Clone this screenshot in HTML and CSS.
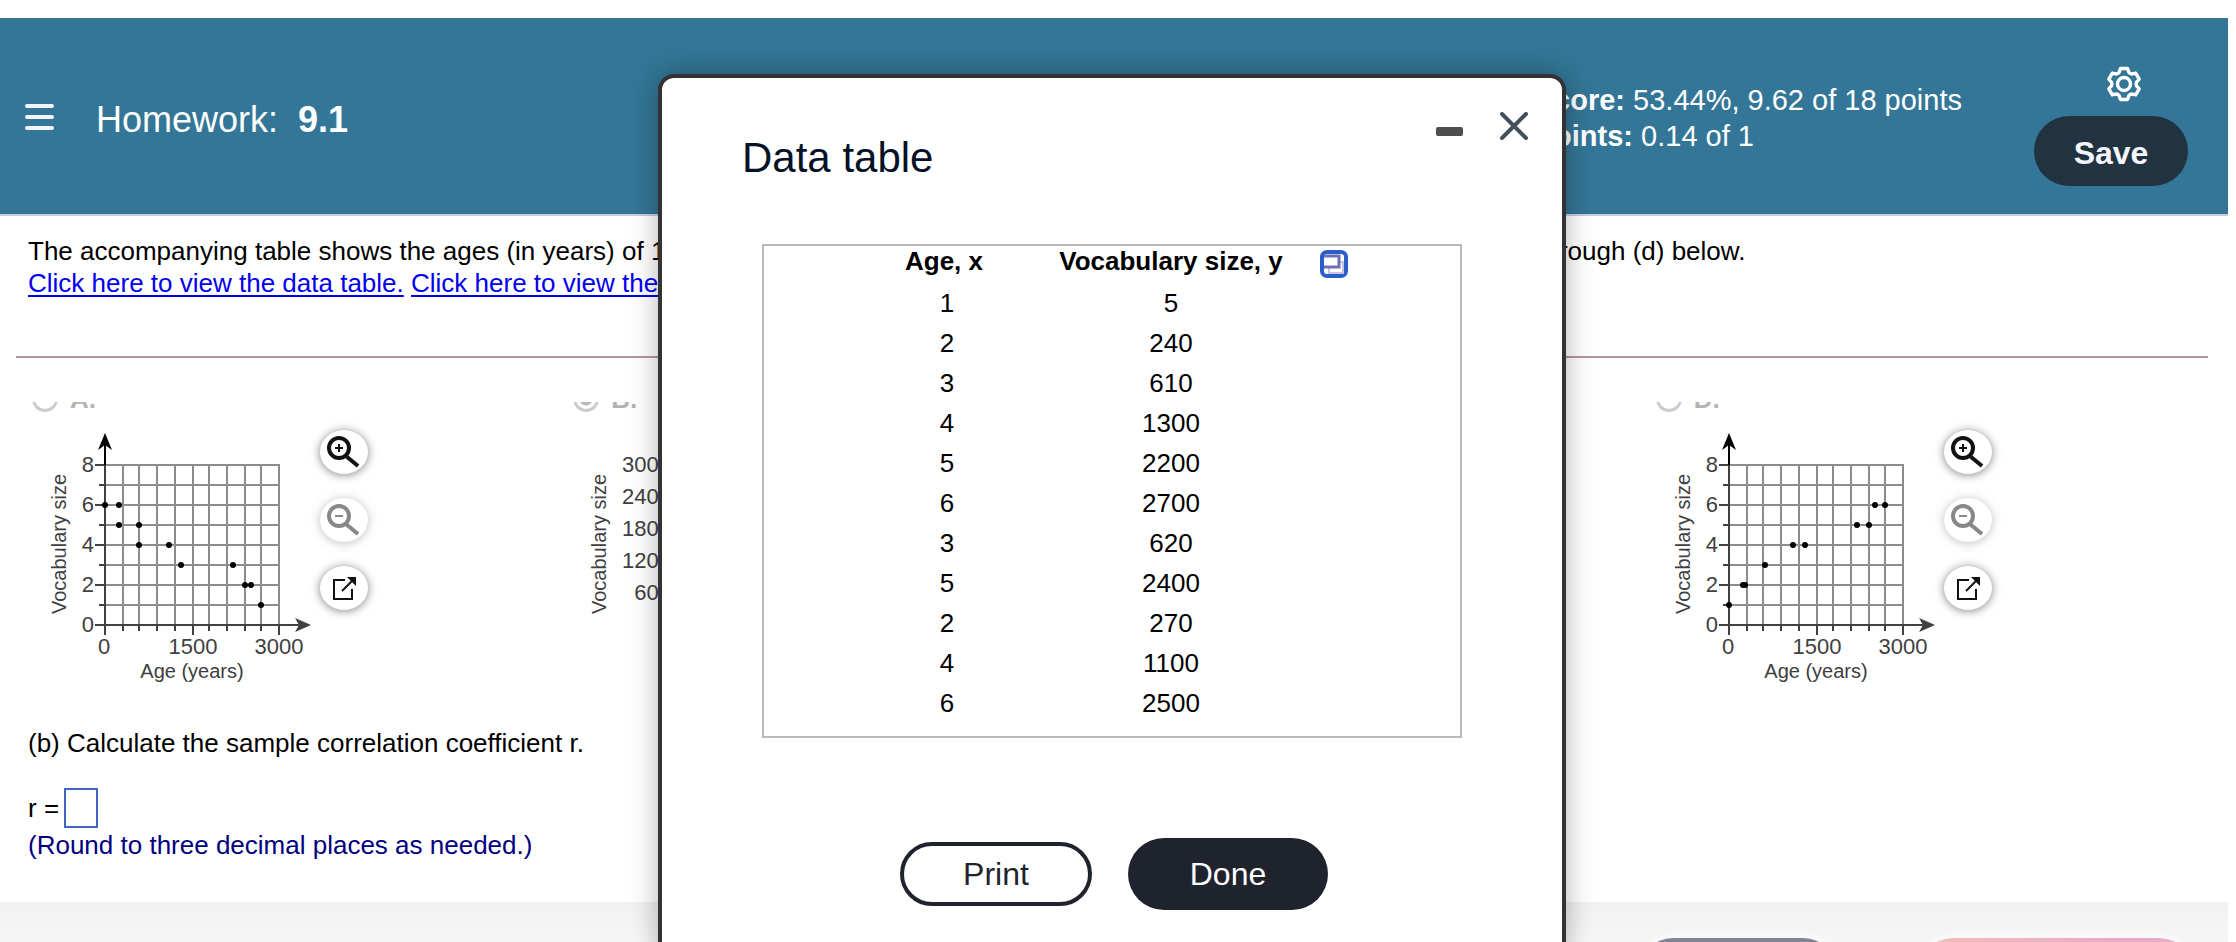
FILE: index.html
```html
<!DOCTYPE html>
<html lang="en">
<head>
<meta charset="utf-8">
<title>Homework: 9.1</title>
<link rel="stylesheet" href="styles.css">
</head>
<body>
<svg class="defs" aria-hidden="true">
  <symbol id="plus-lens" viewBox="0 0 34 34" overflow="visible">
    <circle cx="12" cy="13" r="10" fill="none" stroke="currentColor" stroke-width="4"/>
    <path d="M12 9v8M8 13h8" stroke="currentColor" stroke-width="2"/>
    <path d="M19.500 21.500L31 31" stroke="currentColor" stroke-width="4"/>
  </symbol>
  <symbol id="minus-lens" viewBox="0 0 34 34" overflow="visible">
    <circle cx="12" cy="13" r="10" fill="none" stroke="currentColor" stroke-width="4"/>
    <path d="M8 13h8" stroke="currentColor" stroke-width="2"/>
    <path d="M19.500 21.500L31 31" stroke="currentColor" stroke-width="4"/>
  </symbol>
  <symbol id="popout" viewBox="0 0 34 34">
    <path d="M18 9H7v19h18V18" fill="none" stroke="currentColor" stroke-width="2"/>
    <path d="M15 20L26 9" stroke="currentColor" stroke-width="2"/>
    <path d="M20 6h9v9z" fill="currentColor"/>
  </symbol>
  <symbol id="plot" viewBox="28 416 288 280">
    <path class="grid" d="M123 465V625M139 465V625M157 465V625M175 465V625M193 465V625M209 465V625M227 465V625M245 465V625M261 465V625M279 465V625M105 465H280M105 485H279M105 505H279M105 525H279M105 545H279M105 565H279M105 585H279M105 605H279"/>
    <path class="axis" d="M105 465V635M95 625H299M193 625V635M279 625V635M123 625V631M139 625V631M157 625V631M175 625V631M209 625V631M227 625V631M245 625V631M261 625V631M95 465H105M95 505H105M95 545H105M95 585H105M99 485H105M99 525H105M99 565H105M99 605H105"/>
    <path d="M311 625L295 618L299 625L295 632Z" fill="#404040"/>
    <path d="M105 465V445" stroke="#000" stroke-width="2"/>
    <path d="M105 433L98 450L105 445L112 450Z"/>
    <g class="tick-end"><text x="94" y="472">8</text><text x="94" y="512">6</text><text x="94" y="552">4</text><text x="94" y="592">2</text><text x="94" y="632">0</text></g>
    <g class="tick-mid"><text x="104" y="654">0</text><text x="193" y="654">1500</text><text x="279" y="654">3000</text></g>
    <text class="axis-name" x="192" y="678">Age (years)</text>
    <text class="axis-name" transform="translate(66 544) rotate(-90)">Vocabulary size</text>
  </symbol>
</svg>

<header class="topbar">
  <button class="menu" aria-label="Menu"><svg viewBox="0 0 30 28"><path d="M3 3H28M3 14H28M3 25H28" stroke="#f5f5fd" stroke-width="4" stroke-linecap="round"/></svg></button>
  <h1 class="title">Homework:&nbsp; <b>9.1</b></h1>
  <div class="score">
    <div><b>Score:</b> 53.44%, 9.62 of 18 points</div>
    <div><b>Points:</b> 0.14 of 1</div>
  </div>
  <div class="actions">
    <button class="gear" aria-label="Settings"><svg viewBox="0 0 36 36" fill="none" stroke="#fff" stroke-width="3.400" stroke-linejoin="round"><path d="M14.500 2.500H21.500L23 6.600Q24 8 26 8L29.700 7.200L33.200 13.200L30.500 16.200Q29.700 18 30.500 19.800L33.200 22.800L29.700 28.800L26 28Q24 28 23 29.400L21.500 33.500H14.500L13 29.400Q12 28 10 28L6.300 28.800L2.800 22.800L5.500 19.800Q6.300 18 5.500 16.200L2.800 13.200L6.300 7.200L10 8Q12 8 13 6.600Z"/><circle cx="18" cy="18" r="6.500"/></svg></button>
    <button class="save">Save</button>
  </div>
</header>

<main class="question">
  <p>The accompanying table shows the ages (in years) of 11 children and the numbers of words in their vocabulary. Complete parts (a) through (d) below.</p>
  <p><a href="#table">Click here to view the data table.</a> <a href="#critical">Click here to view the table of critical values for the correlation coefficient.</a></p>
  <hr class="rule">
  <section class="options">
    <div class="option">
      <label class="choice"><input type="radio" name="plot" disabled>A.</label>
      <div class="figure">
        <svg class="chart" viewBox="28 416 288 280">
          <use href="#plot" x="28" y="416" width="288" height="280"/>
          <g><circle cx="105" cy="505" r="3"/><circle cx="119" cy="505" r="3"/><circle cx="119" cy="525" r="3"/><circle cx="139" cy="525" r="3"/><circle cx="139" cy="545" r="3"/><circle cx="169" cy="545" r="3"/><circle cx="181" cy="565" r="3"/><circle cx="233" cy="565" r="3"/><circle cx="245" cy="585" r="3"/><circle cx="251" cy="585" r="3"/><circle cx="261" cy="605" r="3"/></g>
        </svg>
        <div class="tools">
          <button class="tool" aria-label="Zoom in"><svg><use href="#plus-lens"/></svg></button>
          <button class="tool dim" aria-label="Zoom out" disabled><svg><use href="#minus-lens"/></svg></button>
          <button class="tool" aria-label="Open in window"><svg><use href="#popout"/></svg></button>
        </div>
      </div>
    </div>
    <div class="option">
      <label class="choice"><input type="radio" name="plot" checked disabled>B.</label>
      <div class="figure">
        <svg class="chart" viewBox="28 416 288 280">
          <g class="tick-end"><text x="130" y="472">3000</text><text x="130" y="504">2400</text><text x="130" y="536">1800</text><text x="130" y="568">1200</text><text x="130" y="600">600</text><text x="130" y="632">0</text></g>
          <text class="axis-name" transform="translate(65 544) rotate(-90)">Vocabulary size</text>
        </svg>
      </div>
    </div>
    <div class="option"></div>
    <div class="option">
      <label class="choice"><input type="radio" name="plot" disabled>D.</label>
      <div class="figure">
        <svg class="chart" viewBox="28 416 288 280">
          <use href="#plot" x="28" y="416" width="288" height="280"/>
          <g><circle cx="105" cy="605" r="3"/><circle cx="119" cy="585" r="3"/><circle cx="121" cy="585" r="3"/><circle cx="141" cy="565" r="3"/><circle cx="169" cy="545" r="3"/><circle cx="181" cy="545" r="3"/><circle cx="233" cy="525" r="3"/><circle cx="245" cy="525" r="3"/><circle cx="251" cy="505" r="3"/><circle cx="261" cy="505" r="3"/></g>
        </svg>
        <div class="tools">
          <button class="tool" aria-label="Zoom in"><svg><use href="#plus-lens"/></svg></button>
          <button class="tool dim" aria-label="Zoom out" disabled><svg><use href="#minus-lens"/></svg></button>
          <button class="tool" aria-label="Open in window"><svg><use href="#popout"/></svg></button>
        </div>
      </div>
    </div>
  </section>
  <p>(b) Calculate the sample correlation coefficient r.</p>
  <div class="answer"><label for="r">r =</label><input id="r" type="text"></div>
  <p class="hint">(Round to three decimal places as needed.)</p>
</main>

<footer class="bottombar">
  <button class="clear" aria-label="Clear all"></button>
  <button class="check" aria-label="Check answer"></button>
</footer>

<div class="modal" role="dialog" aria-labelledby="modal-title">
  <div class="modal-head">
    <h2 id="modal-title">Data table</h2>
    <button class="minimize" aria-label="Minimize"></button>
    <button class="close" aria-label="Close"><svg viewBox="0 0 28 28"><path d="M2 2L26 26M26 2L2 26" stroke="#434f5c" stroke-width="4" stroke-linecap="round"/></svg></button>
  </div>
  <div class="frame">
    <table class="data" id="table">
      <thead><tr><th class="age">Age, x</th><th class="size">Vocabulary size, y</th><td><button class="copy" aria-label="Copy table"><svg viewBox="0 0 28 28"><rect x="2" y="2" width="24" height="24" rx="5" fill="#fff" stroke="#2a5fc9" stroke-width="4"/><path d="M9 18v5h14V12h-3" fill="none" stroke="#c3c3e2" stroke-width="2"/><path d="M4 17h15V6H4" fill="none" stroke="#6f6fb5" stroke-width="3"/></svg></button></td></tr></thead>
      <tbody>
        <tr><td>1</td><td>5</td></tr>
        <tr><td>2</td><td>240</td></tr>
        <tr><td>3</td><td>610</td></tr>
        <tr><td>4</td><td>1300</td></tr>
        <tr><td>5</td><td>2200</td></tr>
        <tr><td>6</td><td>2700</td></tr>
        <tr><td>3</td><td>620</td></tr>
        <tr><td>5</td><td>2400</td></tr>
        <tr><td>2</td><td>270</td></tr>
        <tr><td>4</td><td>1100</td></tr>
        <tr><td>6</td><td>2500</td></tr>
      </tbody>
    </table>
  </div>
  <div class="modal-actions">
    <button class="print">Print</button>
    <button class="done">Done</button>
  </div>
</div>
</body>
</html>
```
FILE: styles.css
```css
* { box-sizing: border-box; }
html, body { height: 100%; }
body {
  display: flex;
  flex-direction: column;
  margin: 0;
  padding: 18px 8px 0 0;
  overflow: hidden;
  position: relative;
  background: #fff;
  color: #000;
  font: 26px/32px "Liberation Sans", Arial, sans-serif;
}
button { border: 0; padding: 0; background: none; font: inherit; cursor: pointer; }
svg { display: block; }
p, h1, h2 { margin: 0; font-weight: normal; }
.defs { width: 0; height: 0; position: absolute; }

.topbar {
  display: flex;
  flex: none;
  align-items: flex-start;
  height: 198px;
  padding: 0 40px 0 24px;
  background: #337697;
  border-bottom: 2px solid #c9cedb;
  color: #fff;
}
.menu { width: 30px; margin: 85px 42px 0 0; }
.title { flex: 1; margin-top: 82px; font-size: 36px; line-height: 40px; }
.score { margin: 64px 72px 0 0; font-size: 29px; line-height: 36px; }
.actions { display: flex; flex-direction: column; align-items: center; gap: 14px; padding-top: 48px; }
.gear { width: 36px; height: 36px; margin-left: 26px; }
.save { width: 154px; height: 70px; padding-top: 4px; border-radius: 35px; background: #213240; color: #f5f5fd; font-size: 32px; font-weight: bold; }

.question { flex: none; padding: 19px 35px 0 28px; }
a { color: #00e; text-decoration-thickness: 2px; text-underline-offset: 3px; }
.question p { white-space: nowrap; }
.rule { height: 2px; margin: 57px -15px 44px -12px; border: 0; background: #b5959d; }
.options { display: grid; grid-template-columns: repeat(4, 1fr); height: 294px; overflow: hidden; margin-bottom: 31px; }
.choice { display: flex; align-items: center; gap: 12px; height: 28px; margin: -17px 0 0 4px; color: #b4b4b4; font-weight: bold; line-height: 26px; }
.choice input { appearance: none; width: 26px; height: 26px; margin: 0; border: 3px solid #ccc; border-radius: 50%; }
.choice input:checked { background: radial-gradient(circle, #bbb 6px, #fff 7px); }
.figure { display: flex; gap: 4px; padding-top: 3px; }
.chart { width: 288px; height: 280px; }
.grid { fill: none; stroke: #8c8c8c; stroke-width: 2; }
.axis { fill: none; stroke: #404040; stroke-width: 2; }
.tick-end, .tick-mid { font-size: 22px; fill: #404040; }
.tick-end { text-anchor: end; }
.tick-mid { text-anchor: middle; }
.axis-name { font-size: 20px; fill: #404040; text-anchor: middle; }
.tools { display: flex; flex-direction: column; gap: 24px; padding-top: 14px; }
.tool { display: grid; place-items: center; width: 48px; height: 44px; border-radius: 50%; background: #fff; color: #111; box-shadow: 0 1px 10px rgba(0, 0, 0, 0.5); }
.tool svg { width: 34px; height: 34px; }
.dim { opacity: 0.5; }
.answer { display: flex; align-items: center; gap: 5px; margin-top: 29px; }
.answer input { width: 34px; height: 40px; border: 2px solid #3e66c4; font: inherit; }
.hint { margin-top: 1px; color: #00007f; }

.bottombar { display: flex; flex: 1; min-height: 0; overflow: hidden; justify-content: flex-end; gap: 80px; margin-top: 41px; padding: 36px 34px 0; background: linear-gradient(#f1f1f1, #f6f6f6 36px); }
.bottombar button { flex: none; height: 70px; border-radius: 35px; box-shadow: 0 0 0 4px #f9f9f9; }
.clear { width: 200px; background: #808591; }
.check { width: 276px; background: linear-gradient(90deg, #edc0b8, #e8acc8 70%); }

.modal {
  position: absolute;
  top: 74px;
  bottom: -20px;
  left: 50%;
  width: 908px;
  margin-left: -460px;
  padding: 0 100px;
  border: 4px solid #333;
  border-radius: 16px;
  background: #fff;
  box-shadow: 0 0 28px rgba(0, 0, 0, 0.3);
}
.modal-head { display: flex; align-items: flex-start; height: 166px; margin: 0 -66px 0 -20px; }
.modal-head h2 { flex: 1; margin-top: 56px; color: #051127; font-size: 42px; line-height: 48px; }
.minimize { width: 27px; height: 9px; margin: 49px 37px 0 0; border-radius: 2px; background: #4e4e4e; }
.close { width: 28px; height: 28px; margin-top: 34px; }
.frame { padding: 0 0 13px 103px; border: 2px solid #b9b9b9; }
.data { border-collapse: collapse; text-align: center; line-height: 40px; }
.data td, .data th { padding: 0; }
.data th, .data thead td { height: 37px; line-height: 30px; vertical-align: top; }
.data .age { width: 160px; padding-right: 6px; }
.data .size { width: 288px; }
.copy { display: block; width: 28px; height: 28px; margin: 4px 0 0 5px; }
.modal-actions { display: flex; align-items: center; justify-content: center; gap: 36px; padding: 100px 0 0 4px; }
.print, .done { color: #1f232e; font-size: 32px; }
.print { width: 192px; height: 64px; border: 4px solid #1f232e; border-radius: 32px; }
.done { width: 200px; height: 72px; border-radius: 36px; background: #1f232e; color: #fff; }
```
